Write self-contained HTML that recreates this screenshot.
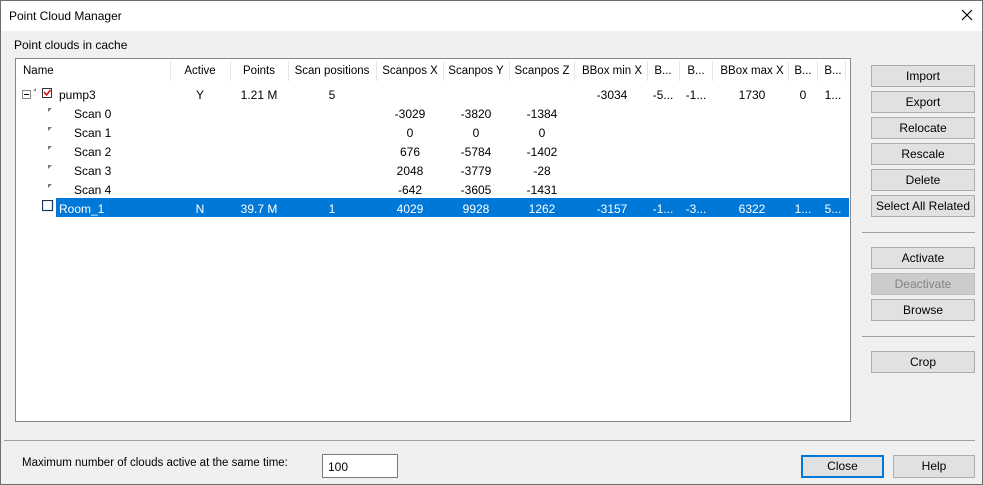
<!DOCTYPE html>
<html><head><meta charset="utf-8"><style>
*{box-sizing:border-box;margin:0;padding:0}
body{width:983px;height:485px;overflow:hidden;background:#f0f0f0;font-family:"Liberation Sans",sans-serif;font-size:12px;color:#000;position:relative}
.a{position:absolute;white-space:nowrap}
.win{position:absolute;left:0;top:0;width:983px;height:485px;border:1px solid #6e6e6e;border-top:1px solid #6e6e6e}
.title{position:absolute;left:1px;top:1px;width:981px;height:30px;background:#fff}
.btn{position:absolute;left:871px;width:104px;height:22px;border:1px solid #adadad;background:#e1e1e1;text-align:center;line-height:20px}
.list{position:absolute;left:15px;top:58px;width:836px;height:364px;background:#fff;border:1px solid #828790}
.h{position:absolute;top:6px;font-size:11.5px}
.sep{position:absolute;top:2px;width:1px;height:20px;background:#e5e5e5}
.c{position:absolute;transform:translateX(-50%)}
.sel{position:absolute;left:40px;top:139px;width:793px;height:19px;background:#0078d7}
</style></head><body>
<div class="win"></div>
<div class="title"></div>
<div class="a" style="left:9px;top:9px;">Point Cloud Manager</div>
<svg class="a" style="left:961px;top:9px" width="12" height="12"><path d="M1 1L11 11M11 1L1 11" stroke="#000" stroke-width="1.2"/></svg>
<div class="a" style="left:14px;top:38px;">Point clouds in cache</div>

<div class="list">
 <div class="h" style="left:7px">Name</div>
 <div class="sep" style="left:154px"></div>
 <div class="h c" style="left:184px">Active</div>
 <div class="sep" style="left:214px"></div>
 <div class="h c" style="left:243px">Points</div>
 <div class="sep" style="left:272px"></div>
 <div class="h c" style="left:316px">Scan positions</div>
 <div class="sep" style="left:360px"></div>
 <div class="h c" style="left:394px">Scanpos X</div>
 <div class="sep" style="left:427px"></div>
 <div class="h c" style="left:460px">Scanpos Y</div>
 <div class="sep" style="left:493px"></div>
 <div class="h c" style="left:526px">Scanpos Z</div>
 <div class="sep" style="left:558px"></div>
 <div class="h c" style="left:596px">BBox min X</div>
 <div class="sep" style="left:631px"></div>
 <div class="h c" style="left:647px">B...</div>
 <div class="sep" style="left:663px"></div>
 <div class="h c" style="left:680px">B...</div>
 <div class="sep" style="left:696px"></div>
 <div class="h c" style="left:736px">BBox max X</div>
 <div class="sep" style="left:772px"></div>
 <div class="h c" style="left:787px">B...</div>
 <div class="sep" style="left:801px"></div>
 <div class="h c" style="left:817px">B...</div>
 <div class="sep" style="left:829px"></div>

 <svg class="a" style="left:6px;top:28px" width="40" height="13"><rect x="0.5" y="3.5" width="8" height="8" fill="#fff" stroke="#888"/><path d="M2 7.5H7" stroke="#000"/><path d="M11 4L14 1V4Z" fill="#888"/><rect x="20.5" y="1.5" width="9" height="9" fill="#fff" stroke="#333"/><path d="M22 5L24.5 8L28.5 3" stroke="#d00" stroke-width="1.5" fill="none"/></svg>
 <div class="a" style="left:43px;top:29px">pump3</div>
 <div class="a c" style="left:184px;top:29px">Y</div>
 <div class="a c" style="left:243px;top:29px">1.21 M</div>
 <div class="a c" style="left:316px;top:29px">5</div>
 <div class="a c" style="left:596px;top:29px">-3034</div>
 <div class="a c" style="left:647px;top:29px">-5...</div>
 <div class="a c" style="left:680px;top:29px">-1...</div>
 <div class="a c" style="left:736px;top:29px">1730</div>
 <div class="a c" style="left:787px;top:29px">0</div>
 <div class="a c" style="left:817px;top:29px">1...</div>

 <svg class="a" style="left:32px;top:49px" width="5" height="100"><path d="M0 0H4L0 4Z M0 19H4L0 23Z M0 38H4L0 42Z M0 57H4L0 61Z M0 76H4L0 80Z" fill="#777"/></svg>
 <div class="a" style="left:58px;top:48px">Scan 0</div>
 <div class="a" style="left:58px;top:67px">Scan 1</div>
 <div class="a" style="left:58px;top:86px">Scan 2</div>
 <div class="a" style="left:58px;top:105px">Scan 3</div>
 <div class="a" style="left:58px;top:124px">Scan 4</div>
 <div class="a c" style="left:394px;top:48px">-3029</div><div class="a c" style="left:460px;top:48px">-3820</div><div class="a c" style="left:526px;top:48px">-1384</div>
 <div class="a c" style="left:394px;top:67px">0</div><div class="a c" style="left:460px;top:67px">0</div><div class="a c" style="left:526px;top:67px">0</div>
 <div class="a c" style="left:394px;top:86px">676</div><div class="a c" style="left:460px;top:86px">-5784</div><div class="a c" style="left:526px;top:86px">-1402</div>
 <div class="a c" style="left:394px;top:105px">2048</div><div class="a c" style="left:460px;top:105px">-3779</div><div class="a c" style="left:526px;top:105px">-28</div>
 <div class="a c" style="left:394px;top:124px">-642</div><div class="a c" style="left:460px;top:124px">-3605</div><div class="a c" style="left:526px;top:124px">-1431</div>

 <div class="sel"></div>
 <svg class="a" style="left:26px;top:141px" width="12" height="12"><rect x="0.5" y="0.5" width="10" height="10" fill="#fff" stroke="#1e3a5a" stroke-width="1.2"/></svg>
 <div class="a" style="left:43px;top:143px;color:#fff">Room_1</div>
 <div class="a c" style="left:184px;top:143px;color:#fff">N</div>
 <div class="a c" style="left:243px;top:143px;color:#fff">39.7 M</div>
 <div class="a c" style="left:316px;top:143px;color:#fff">1</div>
 <div class="a c" style="left:394px;top:143px;color:#fff">4029</div>
 <div class="a c" style="left:460px;top:143px;color:#fff">9928</div>
 <div class="a c" style="left:526px;top:143px;color:#fff">1262</div>
 <div class="a c" style="left:596px;top:143px;color:#fff">-3157</div>
 <div class="a c" style="left:647px;top:143px;color:#fff">-1...</div>
 <div class="a c" style="left:680px;top:143px;color:#fff">-3...</div>
 <div class="a c" style="left:736px;top:143px;color:#fff">6322</div>
 <div class="a c" style="left:787px;top:143px;color:#fff">1...</div>
 <div class="a c" style="left:817px;top:143px;color:#fff">5...</div>
</div>

<div class="btn" style="top:65px">Import</div>
<div class="btn" style="top:91px">Export</div>
<div class="btn" style="top:117px">Relocate</div>
<div class="btn" style="top:143px">Rescale</div>
<div class="btn" style="top:169px">Delete</div>
<div class="btn" style="top:195px">Select All Related</div>
<div class="a" style="left:862px;top:232px;width:113px;height:1px;background:#a0a0a0"></div>
<div class="btn" style="top:247px">Activate</div>
<div class="btn" style="top:273px;background:#cccccc;border-color:#bfbfbf;color:#838383">Deactivate</div>
<div class="btn" style="top:299px">Browse</div>
<div class="a" style="left:862px;top:336px;width:113px;height:1px;background:#a0a0a0"></div>
<div class="btn" style="top:351px">Crop</div>

<div class="a" style="left:4px;top:440px;width:971px;height:1px;background:#a0a0a0"></div>
<div class="a" style="left:22px;top:457px;font-size:11.5px">Maximum number of clouds active at the same time:</div>
<div class="a" style="left:322px;top:454px;width:76px;height:24px;background:#fff;border:1px solid #7a7a7a;padding:5px 0 0 5px">100</div>
<div class="btn" style="left:801px;top:455px;width:83px;height:23px;border:2px solid #0078d7;line-height:19px">Close</div>
<div class="btn" style="left:893px;top:455px;width:82px;height:23px">Help</div>
</body></html>
